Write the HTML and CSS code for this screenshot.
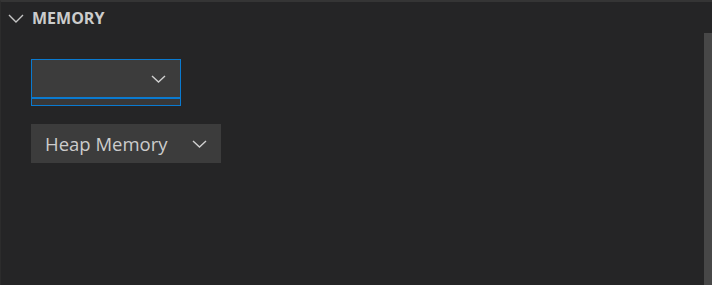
FILE: index.html
```html
<!DOCTYPE html>
<html>
<head>
<meta charset="utf-8">
<link rel="stylesheet" href="styles.css">
</head>
<body>
<div class="pane">
  <div class="header">
    <svg class="twisty" width="16" height="9" viewBox="0 0 16 9"><path d="M1 1 L8 8 L15 1" fill="none" stroke="#c5c5c5" stroke-width="1.4"/></svg>
    <span class="title">MEMORY</span>
  </div>
  <div class="body">
    <div class="select focused">
      <div class="select-main">
        <svg class="chev" width="15" height="8" viewBox="0 0 15 8"><path d="M1 1 L7.5 7 L14 1" fill="none" stroke="#d0d0d0" stroke-width="1.4"/></svg>
      </div>
      <div class="select-foot"></div>
    </div>
    <div class="select plain">
      <span class="label">Heap Memory</span>
      <svg class="chev" width="15" height="8" viewBox="0 0 15 8"><path d="M1 1 L7.5 7 L14 1" fill="none" stroke="#d0d0d0" stroke-width="1.4"/></svg>
    </div>
  </div>
  <div class="scrollbar"></div>
</div>
</body>
</html>
```
FILE: styles.css
```css
html, body {
  margin: 0;
  padding: 0;
  background: #252526;
  width: 712px;
  height: 285px;
  overflow: hidden;
}
.pane {
  position: relative;
  width: 712px;
  height: 285px;
  box-sizing: border-box;
  border-top: 2px solid #353535;
  border-left: 1px solid #2c2c2c;
  font-family: "Open Sans", "Noto Sans", sans-serif;
  color: #cccccc;
}
.header {
  height: 32px;
  display: flex;
  align-items: center;
  padding-left: 7px;
}
.twisty {
  display: block;
  margin-right: 8px;
}
.title {
  font-weight: 700;
  font-size: 16px;
  color: #cccccc;
}
.body {
  padding: 25px 0 0 30px;
  display: flex;
  flex-direction: column;
  align-items: flex-start;
  gap: 18px;
}
.select.focused {
  width: 150px;
  box-sizing: border-box;
  border: 1px solid #0a7ad0;
  background: #3c3c3c;
}
.select-main {
  height: 37px;
  display: flex;
  align-items: center;
  justify-content: flex-end;
  padding-right: 14px;
  border-bottom: 2px solid #0a7ad0;
}
.select-foot {
  height: 6px;
  background: #383838;
}
.select.plain {
  width: 190px;
  height: 39px;
  box-sizing: border-box;
  background: #3c3c3c;
  display: flex;
  align-items: center;
  padding-left: 14px;
  padding-right: 14px;
}
.label {
  font-size: 18.5px;
  color: #cccccc;
  flex: 1;
}
.chev {
  display: block;
}
.scrollbar {
  position: absolute;
  right: 0;
  top: 31px;
  width: 8px;
  bottom: 0;
  background: #474747;
}
```
